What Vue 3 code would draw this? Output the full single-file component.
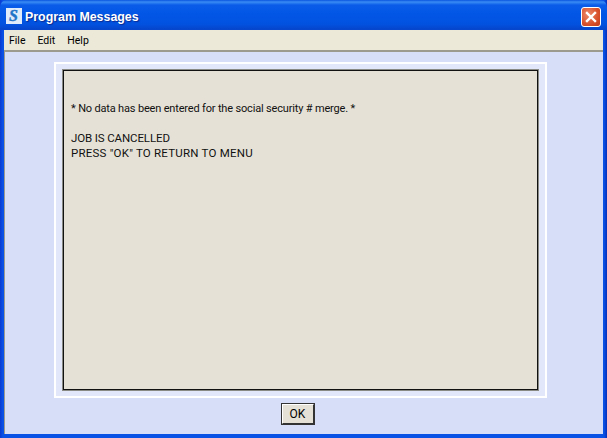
<template>
    <div class="window">
        <div class="titlebar">
            <svg class="app-icon" width="16" height="16" viewBox="0 0 16 16">
                <rect width="16" height="16" fill="#dfeafa" />
                <text x="7.5" y="12.5" text-anchor="middle" class="app-letter">S</text>
            </svg>
            <span class="title">Program Messages</span>
            <button class="close">
                <svg width="20" height="20" viewBox="0 0 20 20">
                    <path d="M6 6 L14 14 M14 6 L6 14" stroke="#fff" stroke-width="2.4" stroke-linecap="square" fill="none" />
                </svg>
            </button>
        </div>
        <div class="menubar">
            <span v-for="item in menu" :key="item">{{ item }}</span>
        </div>
        <div class="content">
            <div class="panel">
                <div class="messages">
                    <p class="note">* No data has been entered for the social security # merge. *</p>
                    <p class="job">JOB IS CANCELLED</p>
                    <p class="press">PRESS "OK" TO RETURN TO MENU</p>
                </div>
            </div>
            <div class="footer">
                <button class="ok">OK</button>
            </div>
        </div>
    </div>
</template>

<script setup>
const menu = ['File', 'Edit', 'Help'];
</script>

<style>
html, body {
    margin: 0;
    background: #0a3fd0;
}
</style>

<style scoped>
.window {
    width: 607px;
    height: 438px;
    box-sizing: border-box;
    display: flex;
    flex-direction: column;
    padding: 0 4px 4px 4px;
    font-family: "Roboto", Arial, sans-serif;
    background: linear-gradient(90deg, #0a3ad0 0, #0a52e6 3px, #0a52e6 604px, #0730b8 607px);
}

.titlebar {
    height: 30px;
    box-sizing: border-box;
    flex: none;
    display: flex;
    align-items: center;
    margin: 0 -4px;
    padding: 2px 6px 0 6px;
    background: linear-gradient(180deg, #0a55e0 0, #3b8cf5 2px, #0a5ce8 5px, #0256e6 14px, #0252e0 24px, #0546cc 29px);
    border-radius: 7px 7px 0 0;
}

.app-icon {
    flex: none;
}

.app-letter {
    font-family: "Liberation Serif", serif;
    font-weight: bold;
    font-style: italic;
    font-size: 16px;
    fill: #1f74c8;
    stroke: #1f74c8;
    stroke-width: 0.4px;
}

.title {
    margin-left: 3px;
    padding-top: 1px;
    color: white;
    font-family: "Liberation Sans", Arial, sans-serif;
    font-size: 12.4px;
    font-weight: bold;
    text-shadow: 1px 1px 1px #0a2a90;
}

.close {
    margin-left: auto;
    margin-top: 1px;
    width: 20px;
    height: 20px;
    padding: 0;
    display: flex;
    box-sizing: border-box;
    border: 1px solid white;
    border-radius: 3px;
    background: radial-gradient(circle at 35% 35%, #ec8a6c, #d8512c 60%, #c03a18);
    overflow: hidden;
}

.close svg {
    margin: -1px;
    flex: none;
}

.menubar {
    height: 20px;
    flex: none;
    display: flex;
    align-items: center;
    gap: 12px;
    padding-left: 5px;
    background: #ece9d8;
    border-bottom: 2px solid #9c9a8e;
    font-size: 10.5px;
    color: black;
}

.content {
    flex: 1;
    display: flex;
    flex-direction: column;
    align-items: center;
    background: #d6dff7;
    border-left: 1px solid #9c9a8e;
    padding: 10px 7px 0 0;
}

.panel {
    width: 493px;
    height: 336px;
    box-sizing: border-box;
    background: #e2e8fa;
    border: 2px solid white;
    padding: 6px 7px;
    display: flex;
}

.messages {
    flex: 1;
    background: #e6e1d6;
    border: 1px solid #111;
    outline: 1px solid #8a8a84;
    padding: 30px 7px 0;
    font-size: 11.5px;
    line-height: 15px;
    color: #111;
}

.messages p {
    margin: 0;
    white-space: nowrap;
}

.messages .note {
    font-size: 11px;
    letter-spacing: -0.17px;
    margin-bottom: 15px;
}

.job {
    letter-spacing: -0.12px;
}

.press {
    letter-spacing: 0.22px;
}

.footer {
    margin-top: 5px;
    margin-right: 6px;
}

.ok {
    display: block;
    width: 34px;
    height: 22px;
    padding: 0;
    box-sizing: border-box;
    background: #e6e1d6;
    border: 2px solid;
    border-color: #fff #333 #333 #fff;
    outline: 1px solid #333;
    outline-offset: -1px;
    font-family: "Roboto", Arial, sans-serif;
    font-size: 12px;
    color: black;
}
</style>
